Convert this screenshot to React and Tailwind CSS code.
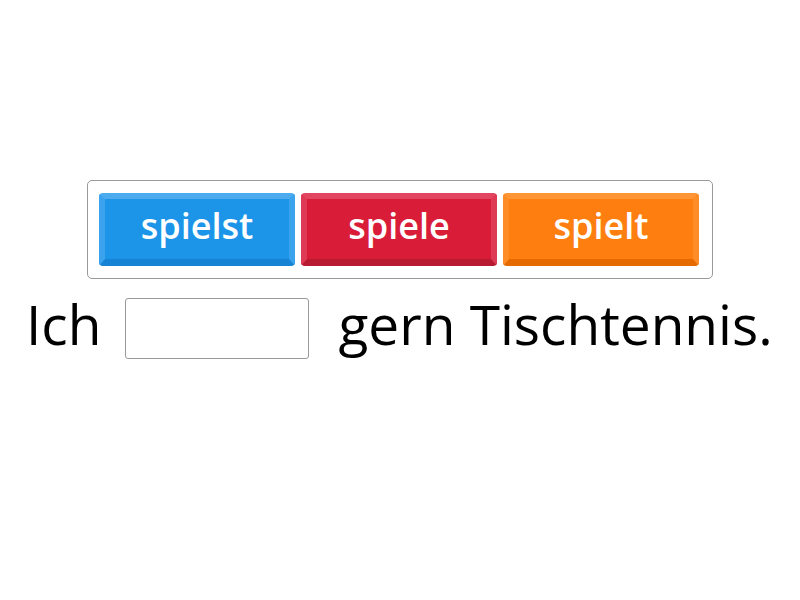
// Word choice buttons
const words = [
    { text: "spielst", cls: "bg-[#1c95e9] border-t-[#4cabef] border-x-[#3ba3ee] border-b-[#1683d4]" },
    { text: "spiele", cls: "bg-[#d91d39] border-t-[#e2455f] border-x-[#df3a55] border-b-[#b71a31]" },
    { text: "spielt", cls: "bg-[#ff7e10] border-t-[#ff9535] border-x-[#ff8d27] border-b-[#e56b00]" },
];

function App() {
    return (
        <div className="w-[800px] h-[600px] bg-white font-['Open_Sans',sans-serif] flex flex-col items-center pt-[180px]">
            {/* Answer box */}
            <div className="w-[626px] h-[99px] border border-[#9a9a9a] rounded-[5px] flex gap-[6px] px-[11px] pt-[12px]">
                {words.map((w) => (
                    <div
                        key={w.text}
                        className={`w-[196px] h-[73px] rounded-[4px] border-[6px] border-b-[7px] flex items-center justify-center text-white text-[36px] font-semibold leading-none pb-[6px] ${w.cls}`}
                    >
                        {w.text}
                    </div>
                ))}
            </div>

            {/* Sentence */}
            <div className="w-[800px] flex items-start text-[55px] text-black leading-none mt-[12px] pl-[26px]">
                <span className="mt-[5px]">Ich</span>
                <div className="w-[184px] h-[61px] border border-[#9a9a9a] rounded-[3px] ml-[24px] mr-[29px] mt-[7px]" />
                <span className="mt-[5px]">gern Tischtennis.</span>
            </div>
        </div>
    );
}

export default App;
